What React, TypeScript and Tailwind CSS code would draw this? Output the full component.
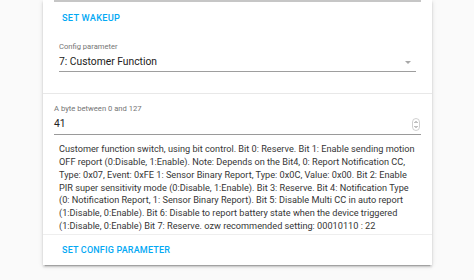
import React from 'react';

const descLines = [
  'Customer function switch, using bit control. Bit 0: Reserve. Bit 1: Enable sending motion',
  'OFF report (0:Disable, 1:Enable). Note: Depends on the Bit4, 0: Report Notification CC,',
  'Type: 0x07, Event: 0xFE 1: Sensor Binary Report, Type: 0x0C, Value: 0x00. Bit 2: Enable',
  'PIR super sensitivity mode (0:Disable, 1:Enable). Bit 3: Reserve. Bit 4: Notification Type',
  '(0: Notification Report, 1: Sensor Binary Report). Bit 5: Disable Multi CC in auto report',
  '(1:Disable, 0:Enable). Bit 6: Disable to report battery state when the device triggered',
  '(1:Disable, 0:Enable) Bit 7: Reserve. ozw recommended setting: 00010110 : 22',
];

export default function App() {
  return (
    <div className="w-[474px] h-[280px] overflow-hidden bg-[#fafafa] font-['Roboto',sans-serif]">
      <div className="ml-[43px] w-[389px] bg-white shadow-[0_2px_2px_rgba(0,0,0,0.14),0_1px_5px_rgba(0,0,0,0.12),0_3px_1px_-2px_rgba(0,0,0,0.2)]">
        {/* previous field underline */}
        <div className="mx-[11px] h-[2px] bg-[#c6c6c6]" />

        {/* Wakeup action */}
        <div className="h-[34px] pt-[10px] pl-[19px]">
          <span className="block text-[9.2px] leading-[12px] font-medium tracking-[0.03em] text-[#03a9f4]">
            SET WAKEUP
          </span>
        </div>

        {/* Config parameter select */}
        <div className="mx-[16px] mt-[6px] mb-[21px] border-b border-[#9e9e9e]">
          <div className="text-[7.6px] leading-[10px] text-[#757575]">Config parameter</div>
          <div className="mt-[3px] pb-[2px] flex items-center justify-between">
            <span className="text-[10.3px] leading-[14px] text-[#212121]">7: Customer Function</span>
            <svg width="6" height="4" viewBox="0 0 6 4" className="mr-[5px] mt-[2px]">
              <path d="M0 0 L6 0 L3 3 Z" fill="#a8a8a8" />
            </svg>
          </div>
        </div>

        <div className="h-px bg-[#e8e8e8]" />

        {/* Value input */}
        <div className="mx-[11px] mt-[10px] border-b border-[#9a9a9a]">
          <div className="text-[7.65px] leading-[10px] text-[#757575]">A byte between 0 and 127</div>
          <div className="mt-[3px] pb-[3px] flex items-center justify-between">
            <span className="text-[10.3px] leading-[14px] text-[#212121]">41</span>
            <svg width="8" height="13" viewBox="0 0 8 13" className="mr-[1px]">
              <rect x="0.5" y="0.5" width="7" height="12" rx="3.5" fill="none" stroke="#c4c4c4" strokeWidth="0.8" />
              <path d="M2.5 5 L4 3.5 L5.5 5" fill="none" stroke="#616161" strokeWidth="0.8" />
              <path d="M2.5 8 L4 9.5 L5.5 8" fill="none" stroke="#616161" strokeWidth="0.8" />
            </svg>
          </div>
        </div>

        {/* Description */}
        <div className="mx-[16px] mt-[8px] text-[9.18px] leading-[12.85px] text-[#363636]">
          {descLines.map((line) => (
            <div key={line} className="whitespace-nowrap">
              {line}
            </div>
          ))}
        </div>

        <div className="mt-[1px] h-px bg-[#eeeeee]" />

        {/* Card action */}
        <div className="pt-[9px] pb-[9px] pl-[19px]">
          <span className="block text-[9px] leading-[12px] font-medium tracking-[0.02em] text-[#03a9f4]">
            SET CONFIG PARAMETER
          </span>
        </div>
      </div>
    </div>
  );
}
